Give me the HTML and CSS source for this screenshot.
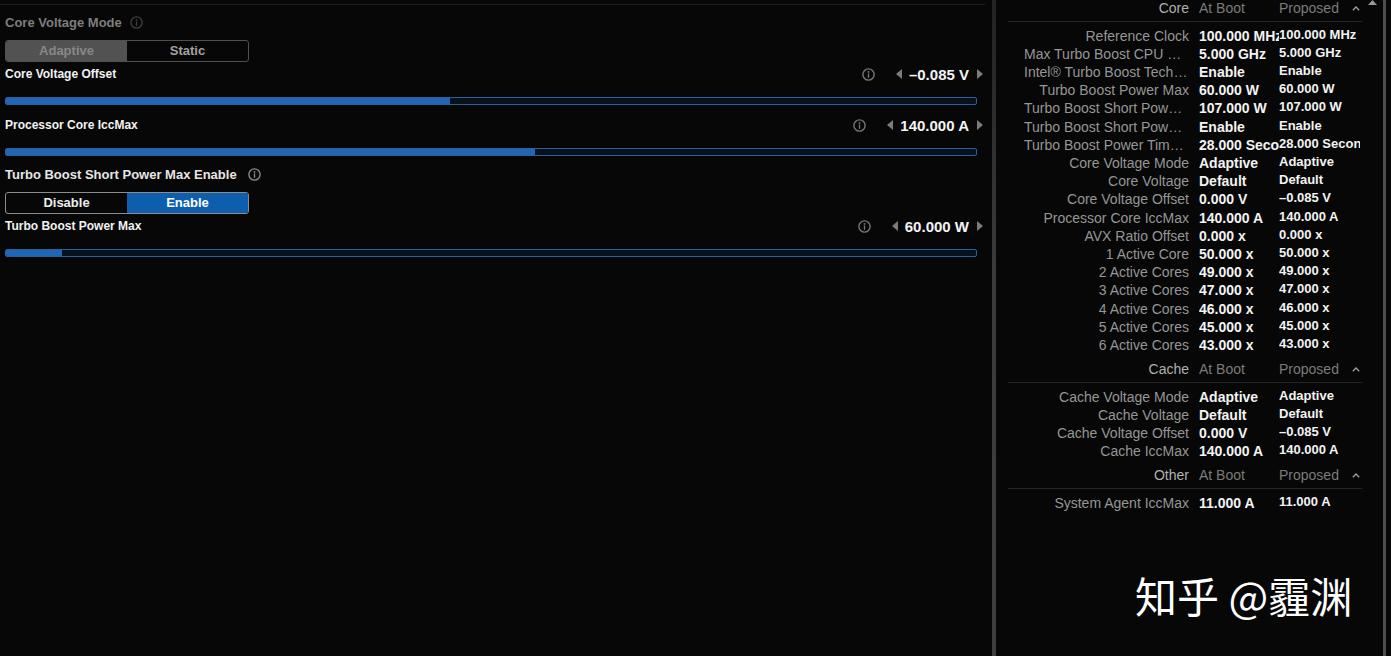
FILE: index.html
```html
<!DOCTYPE html>
<html lang="en">
<head>
<meta charset="utf-8">
<title>Tuning</title>
<link rel="stylesheet" href="styles.css">
</head>
<body>
<div class="app">
  <section class="left">
    <div class="topline"></div>

    <div class="mode disabled">
      <div class="mode-label">Core Voltage Mode
        <svg class="info" viewBox="0 0 13 13" width="13" height="13"><circle cx="6.5" cy="6.5" r="5.6" fill="none" stroke="currentColor" stroke-width="1.4"/><circle cx="6.5" cy="3.9" r="0.9" fill="currentColor"/><rect x="5.85" y="5.4" width="1.3" height="4.4" fill="currentColor"/></svg>
      </div>
      <div class="seg"><span class="seg-btn on">Adaptive</span><span class="seg-btn">Static</span></div>
    </div>

    <div class="setting after-seg">
      <div class="head">
        <span class="name">Core Voltage Offset</span>
        <span class="ctl">
          <svg class="info" viewBox="0 0 13 13" width="13" height="13"><circle cx="6.5" cy="6.5" r="5.6" fill="none" stroke="currentColor" stroke-width="1.4"/><circle cx="6.5" cy="3.9" r="0.9" fill="currentColor"/><rect x="5.85" y="5.4" width="1.3" height="4.4" fill="currentColor"/></svg>
          <svg class="tri" viewBox="0 0 6 10" width="6" height="10"><polygon points="6,0 6,10 0,5" fill="currentColor"/></svg>
          <span class="val">–0.085 V</span>
          <svg class="tri r" viewBox="0 0 6 10" width="6" height="10"><polygon points="0,0 0,10 6,5" fill="currentColor"/></svg>
        </span>
      </div>
      <div class="slider"><div class="fill" style="width:45.8%"></div></div>
    </div>

    <div class="setting">
      <div class="head">
        <span class="name">Processor Core IccMax</span>
        <span class="ctl">
          <svg class="info" viewBox="0 0 13 13" width="13" height="13"><circle cx="6.5" cy="6.5" r="5.6" fill="none" stroke="currentColor" stroke-width="1.4"/><circle cx="6.5" cy="3.9" r="0.9" fill="currentColor"/><rect x="5.85" y="5.4" width="1.3" height="4.4" fill="currentColor"/></svg>
          <svg class="tri" viewBox="0 0 6 10" width="6" height="10"><polygon points="6,0 6,10 0,5" fill="currentColor"/></svg>
          <span class="val">140.000 A</span>
          <svg class="tri r" viewBox="0 0 6 10" width="6" height="10"><polygon points="0,0 0,10 6,5" fill="currentColor"/></svg>
        </span>
      </div>
      <div class="slider"><div class="fill" style="width:54.5%"></div></div>
    </div>

    <div class="mode">
      <div class="mode-label">Turbo Boost Short Power Max Enable
        <svg class="info" viewBox="0 0 13 13" width="13" height="13"><circle cx="6.5" cy="6.5" r="5.6" fill="none" stroke="currentColor" stroke-width="1.4"/><circle cx="6.5" cy="3.9" r="0.9" fill="currentColor"/><rect x="5.85" y="5.4" width="1.3" height="4.4" fill="currentColor"/></svg>
      </div>
      <div class="seg"><span class="seg-btn">Disable</span><span class="seg-btn on">Enable</span></div>
    </div>

    <div class="setting after-seg">
      <div class="head">
        <span class="name">Turbo Boost Power Max</span>
        <span class="ctl">
          <svg class="info" viewBox="0 0 13 13" width="13" height="13"><circle cx="6.5" cy="6.5" r="5.6" fill="none" stroke="currentColor" stroke-width="1.4"/><circle cx="6.5" cy="3.9" r="0.9" fill="currentColor"/><rect x="5.85" y="5.4" width="1.3" height="4.4" fill="currentColor"/></svg>
          <svg class="tri" viewBox="0 0 6 10" width="6" height="10"><polygon points="6,0 6,10 0,5" fill="currentColor"/></svg>
          <span class="val">60.000 W</span>
          <svg class="tri r" viewBox="0 0 6 10" width="6" height="10"><polygon points="0,0 0,10 6,5" fill="currentColor"/></svg>
        </span>
      </div>
      <div class="slider"><div class="fill" style="width:5.8%"></div></div>
    </div>
  </section>

  <div class="divider"></div>

  <section class="right">
    <div class="tables">
      <div class="group">
        <div class="ghead"><span class="gname">Core</span><span class="gcol">At Boot</span><span class="gcol last">Proposed<svg class="caret" viewBox="0 0 8 5" width="8" height="5"><polyline points="0.8,4.3 4,1 7.2,4.3" fill="none" stroke="currentColor" stroke-width="1.3"/></svg></span></div>
        <div class="rows">
          <div class="row"><span class="k">Reference Clock</span><span class="v">100.000 MHz</span><span class="p">100.000 MHz</span></div>
          <div class="row"><span class="k">Max Turbo Boost CPU Speed</span><span class="v">5.000 GHz</span><span class="p">5.000 GHz</span></div>
          <div class="row"><span class="k">Intel® Turbo Boost Technology</span><span class="v">Enable</span><span class="p">Enable</span></div>
          <div class="row"><span class="k">Turbo Boost Power Max</span><span class="v">60.000 W</span><span class="p">60.000 W</span></div>
          <div class="row"><span class="k">Turbo Boost Short Power Max</span><span class="v">107.000 W</span><span class="p">107.000 W</span></div>
          <div class="row"><span class="k">Turbo Boost Short Power Max Enable</span><span class="v">Enable</span><span class="p">Enable</span></div>
          <div class="row"><span class="k">Turbo Boost Power Time Window</span><span class="v">28.000 Seconds</span><span class="p">28.000 Seconds</span></div>
          <div class="row"><span class="k">Core Voltage Mode</span><span class="v">Adaptive</span><span class="p">Adaptive</span></div>
          <div class="row"><span class="k">Core Voltage</span><span class="v">Default</span><span class="p">Default</span></div>
          <div class="row"><span class="k">Core Voltage Offset</span><span class="v">0.000 V</span><span class="p">–0.085 V</span></div>
          <div class="row"><span class="k">Processor Core IccMax</span><span class="v">140.000 A</span><span class="p">140.000 A</span></div>
          <div class="row"><span class="k">AVX Ratio Offset</span><span class="v">0.000 x</span><span class="p">0.000 x</span></div>
          <div class="row"><span class="k">1 Active Core</span><span class="v">50.000 x</span><span class="p">50.000 x</span></div>
          <div class="row"><span class="k">2 Active Cores</span><span class="v">49.000 x</span><span class="p">49.000 x</span></div>
          <div class="row"><span class="k">3 Active Cores</span><span class="v">47.000 x</span><span class="p">47.000 x</span></div>
          <div class="row"><span class="k">4 Active Cores</span><span class="v">46.000 x</span><span class="p">46.000 x</span></div>
          <div class="row"><span class="k">5 Active Cores</span><span class="v">45.000 x</span><span class="p">45.000 x</span></div>
          <div class="row"><span class="k">6 Active Cores</span><span class="v">43.000 x</span><span class="p">43.000 x</span></div>
        </div>
      </div>

      <div class="group">
        <div class="ghead"><span class="gname">Cache</span><span class="gcol">At Boot</span><span class="gcol last">Proposed<svg class="caret" viewBox="0 0 8 5" width="8" height="5"><polyline points="0.8,4.3 4,1 7.2,4.3" fill="none" stroke="currentColor" stroke-width="1.3"/></svg></span></div>
        <div class="rows">
          <div class="row"><span class="k">Cache Voltage Mode</span><span class="v">Adaptive</span><span class="p">Adaptive</span></div>
          <div class="row"><span class="k">Cache Voltage</span><span class="v">Default</span><span class="p">Default</span></div>
          <div class="row"><span class="k">Cache Voltage Offset</span><span class="v">0.000 V</span><span class="p">–0.085 V</span></div>
          <div class="row"><span class="k">Cache IccMax</span><span class="v">140.000 A</span><span class="p">140.000 A</span></div>
        </div>
      </div>

      <div class="group">
        <div class="ghead"><span class="gname">Other</span><span class="gcol">At Boot</span><span class="gcol last">Proposed<svg class="caret" viewBox="0 0 8 5" width="8" height="5"><polyline points="0.8,4.3 4,1 7.2,4.3" fill="none" stroke="currentColor" stroke-width="1.3"/></svg></span></div>
        <div class="rows">
          <div class="row"><span class="k">System Agent IccMax</span><span class="v">11.000 A</span><span class="p">11.000 A</span></div>
        </div>
      </div>
    </div>

    <div class="scroll-up"><svg viewBox="0 0 9 5" width="9" height="5"><polygon points="0,5 9,5 4.5,0" fill="currentColor"/></svg></div>
    <div class="scrollbar"></div>
  </section>
</div>

<div class="watermark">知乎 @霾渊</div>
</body>
</html>
```

FILE: styles.css
```css
* {
  box-sizing: border-box;
  margin: 0;
  padding: 0;
}

html, body {
  height: 100%;
}

body {
  background: #070707;
  font-family: "Liberation Sans", Arial, sans-serif;
  color: #eeeeee;
  overflow: hidden;
  position: relative;
}

.app {
  display: flex;
  height: 656px;
}

/* ---------- left pane ---------- */
.left {
  width: 992px;
  flex: none;
  display: flex;
  flex-direction: column;
  padding-left: 5px;
}

.topline {
  height: 5px;
  margin-left: -5px;
  margin-right: 7px;
  border-bottom: 1px solid #1e1e1e;
}

.mode-label {
  margin-top: 8px;
  height: 18px;
  display: flex;
  align-items: center;
  gap: 11px;
  font-size: 13px;
  font-weight: bold;
  color: #e6e6e6;
}

.setting + .mode .mode-label {
  margin-top: 9px;
}

.mode-label .info {
  color: #8a8a8a;
}

.mode.disabled .mode-label {
  color: #7e7e7e;
  gap: 8px;
}

.mode.disabled .mode-label .info {
  color: #3e3e3e;
}

.seg {
  margin-top: 9px;
  width: 244px;
  height: 22px;
  display: flex;
  border: 1px solid #8c8c8c;
  border-radius: 3px;
  overflow: hidden;
}

.seg-btn {
  flex: 1;
  text-align: center;
  font-size: 13px;
  font-weight: bold;
  line-height: 20px;
  color: #ececec;
}

.seg-btn.on {
  background: #0d5ead;
  color: #ffffff;
}

.mode.disabled .seg {
  border-color: #505050;
}

.mode.disabled .seg-btn {
  color: #a2a2a2;
}

.mode.disabled .seg-btn.on {
  background: #525252;
  color: #888888;
}

.setting {
  display: flex;
  flex-direction: column;
}

.setting .head {
  margin-top: 11px;
  height: 18px;
  display: flex;
  align-items: center;
  justify-content: space-between;
  padding-right: 9px;
}

.setting.after-seg .head {
  margin-top: 3px;
}

.setting .name {
  font-size: 12px;
  font-weight: bold;
  color: #f2f2f2;
}

.ctl {
  display: flex;
  align-items: center;
}

.ctl .info {
  color: #777777;
  margin-right: 21px;
}

.tri {
  color: #7c7c7c;
}

.ctl .val {
  margin: 0 8px 0 7px;
  font-size: 15px;
  font-weight: bold;
  color: #f4f4f4;
}

.slider {
  margin-top: 14px;
  width: 972px;
  height: 8px;
  border: 1px solid #2f5e95;
  border-radius: 2px;
  background: #08121e;
  overflow: hidden;
}

.fill {
  height: 100%;
  background: #1f66b6;
}

/* ---------- divider ---------- */
.divider {
  width: 4px;
  flex: none;
  background: linear-gradient(#222222, #3a3a3a 40%, #3e3e3e);
}

/* ---------- right pane ---------- */
.right {
  flex: 1;
  display: flex;
  padding-left: 12px;
}

.tables {
  width: 354px;
  flex: none;
}

.group + .group {
  margin-top: 7px;
}

.ghead,
.row {
  display: grid;
  grid-template-columns: 191px 80px 83px;
}

.ghead {
  font-size: 14px;
  line-height: 16px;
  padding-bottom: 5px;
  border-bottom: 1px solid #262626;
}

.gname {
  padding-right: 10px;
  text-align: right;
  color: #b0b0b0;
}

.gcol {
  color: #7b7b7b;
}

.gcol.last {
  display: flex;
  align-items: center;
  justify-content: space-between;
  padding-right: 2px;
}

.caret {
  color: #a0a0a0;
}

.rows {
  padding-top: 4.5px;
}

.row {
  line-height: 18.2px;
  white-space: nowrap;
}

.k {
  padding-left: 16px;
  padding-right: 10px;
  text-align: right;
  overflow: hidden;
  text-overflow: ellipsis;
  font-size: 14px;
  color: #969696;
}

.v,
.p {
  overflow: hidden;
  font-weight: bold;
  color: #f3f3f3;
}

.v {
  font-size: 14px;
}

.p {
  font-size: 13px;
  width: 81px;
  margin-top: -1px;
}

.scroll-up {
  margin-left: 6px;
  height: 7px;
  display: flex;
  align-items: flex-start;
  color: #9a9a9a;
}

.scrollbar {
  margin-left: auto;
  margin-right: 5px;
  width: 3px;
  background: #4e4e4e;
}

/* ---------- watermark overlay ---------- */
.watermark {
  position: absolute;
  left: 1135px;
  top: 573px;
  font-family: "Noto Sans CJK SC", sans-serif;
  font-size: 42px;
  line-height: 44px;
  color: #ffffff;
  white-space: nowrap;
}
```
